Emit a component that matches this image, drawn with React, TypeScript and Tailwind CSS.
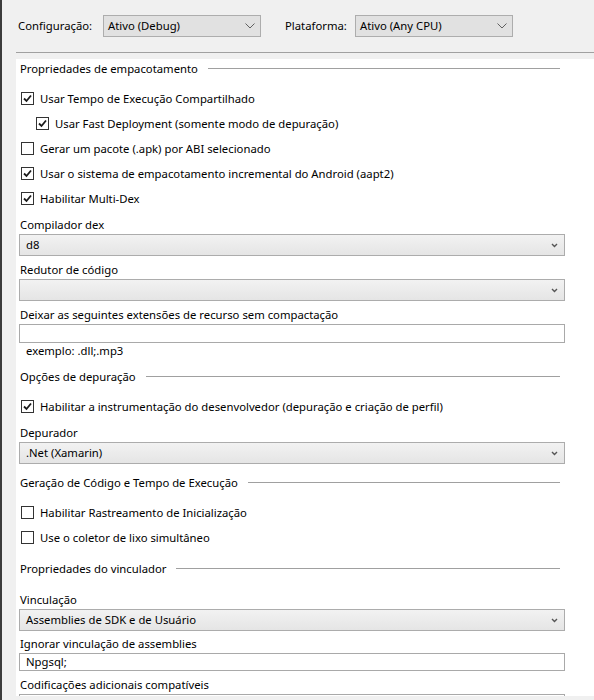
import React from "react";

const FONT = "font-['Noto_Sans','Liberation_Sans',sans-serif]";

const HeaderChevron = () => (
  <svg width="10" height="6" viewBox="0 0 10 6" className="shrink-0">
    <path d="M0.5 0.5 L5 5 L9.5 0.5" fill="none" stroke="#606060" strokeWidth="1" />
  </svg>
);

const SmallChevron = () => (
  <svg width="7" height="5" viewBox="0 0 7 5" className="shrink-0">
    <path d="M1 1 L3.5 3.5 L6 1" fill="none" stroke="#555" strokeWidth="1.4" />
  </svg>
);

const Check = ({ checked }: { checked: boolean }) => (
  <span className="w-[13px] h-[13px] border border-[#333] bg-white flex items-center justify-center shrink-0">
    {checked && (
      <svg width="11" height="11" viewBox="0 0 11 11">
        <path d="M2 5.5 L4.5 8 L9 2.5" fill="none" stroke="#1a1a1a" strokeWidth="1.8" />
      </svg>
    )}
  </span>
);

const CheckRow = ({
  label,
  checked,
  indent,
  className = "",
}: {
  label: string;
  checked: boolean;
  indent?: boolean;
  className?: string;
}) => (
  <div className={`h-[25px] flex items-center gap-[6px] ${indent ? "pl-[17px]" : "pl-[2px]"} ${className}`}>
    <Check checked={checked} />
    <span className="pt-[1px]">{label}</span>
  </div>
);

const Heading = ({ label, className = "" }: { label: string; className?: string }) => (
  <div className={`h-[18px] flex items-center pl-[1px] pr-[34px] ${className}`}>
    <span className="whitespace-nowrap pt-[2px]">{label}</span>
    <div className="flex-1 ml-[10px] border-t border-[#a0a0a0]" />
  </div>
);

const Label = ({ label, className = "" }: { label: string; className?: string }) => (
  <div className={`h-[18px] flex items-center pl-[1px] pt-[1px] ${className}`}>{label}</div>
);

const Select = ({ value }: { value: string }) => (
  <div className="h-[22px] w-[546px] flex items-center justify-between pl-[6px] pr-[6px] border border-[#acacac] bg-gradient-to-b from-[#f2f2f2] to-[#e5e5e5]">
    <span>{value}</span>
    <SmallChevron />
  </div>
);

const Input = ({ value, className = "" }: { value?: string; className?: string }) => (
  <div className={`h-[18px] w-[546px] flex items-center pl-[6px] border border-[#a9a9a9] bg-white ${className}`}>
    {value}
  </div>
);

export default function App() {
  return (
    <div className={`w-[594px] h-[700px] bg-[#f0f0f0] border-l-2 border-[#3c3c3c] overflow-hidden text-[11.3px] text-black ${FONT}`}>
      <div className="h-[52px] flex items-center pl-[16px]">
        <span className="w-[85px] pt-[1px]">Configuração:</span>
        <div className="w-[158px] h-[22px] flex items-center justify-between pl-[4px] pr-[5px] border border-[#adadad] bg-[#e1e1e1]">
          <span>Ativo (Debug)</span>
          <HeaderChevron />
        </div>
        <span className="ml-[24px] w-[70px] pt-[1px]">Plataforma:</span>
        <div className="w-[158px] h-[22px] flex items-center justify-between pl-[4px] pr-[5px] border border-[#adadad] bg-[#e1e1e1]">
          <span>Ativo (Any CPU)</span>
          <HeaderChevron />
        </div>
      </div>
      <div className="ml-[14px] border-t border-[#a0a0a0] h-[7px]" />
      <div className="ml-[14px] h-[637px] bg-white overflow-hidden pl-[3px]">
        <Heading label="Propriedades de empacotamento" />
        <CheckRow label="Usar Tempo de Execução Compartilhado" checked className="mt-[9px]" />
        <CheckRow label="Usar Fast Deployment (somente modo de depuração)" checked indent />
        <CheckRow label="Gerar um pacote (.apk) por ABI selecionado" checked={false} />
        <CheckRow label="Usar o sistema de empacotamento incremental do Android (aapt2)" checked />
        <CheckRow label="Habilitar Multi-Dex" checked />
        <Label label="Compilador dex" className="mt-[5px]" />
        <Select value="d8" />
        <Label label="Redutor de código" className="mt-[5px]" />
        <Select value="" />
        <Label label="Deixar as seguintes extensões de recurso sem compactação" className="mt-[4px] h-[19px]" />
        <Input className="h-[19px]" />
        <div className="h-[16px] flex items-center pl-[7px] pt-[1px]">exemplo: .dll;.mp3</div>
        <Heading label="Opções de depuração" className="mt-[8px]" />
        <CheckRow
          label="Habilitar a instrumentação do desenvolvedor (depuração e criação de perfil)"
          checked
          className="mt-[9px]"
        />
        <Label label="Depurador" className="mt-[5px]" />
        <Select value=".Net (Xamarin)" />
        <Heading label="Geração de Código e Tempo de Execução" className="mt-[9px]" />
        <CheckRow label="Habilitar Rastreamento de Inicialização" checked={false} className="mt-[9px]" />
        <CheckRow label="Use o coletor de lixo simultâneo" checked={false} />
        <Heading label="Propriedades do vinculador" className="mt-[9px]" />
        <Label label="Vinculação" className="mt-[14px]" />
        <Select value="Assemblies de SDK e de Usuário" />
        <Label label="Ignorar vinculação de assemblies" className="mt-[4px]" />
        <Input value="Npgsql;" />
        <Label label="Codificações adicionais compatíveis" className="mt-[5px]" />
        <Input />
      </div>
    </div>
  );
}
